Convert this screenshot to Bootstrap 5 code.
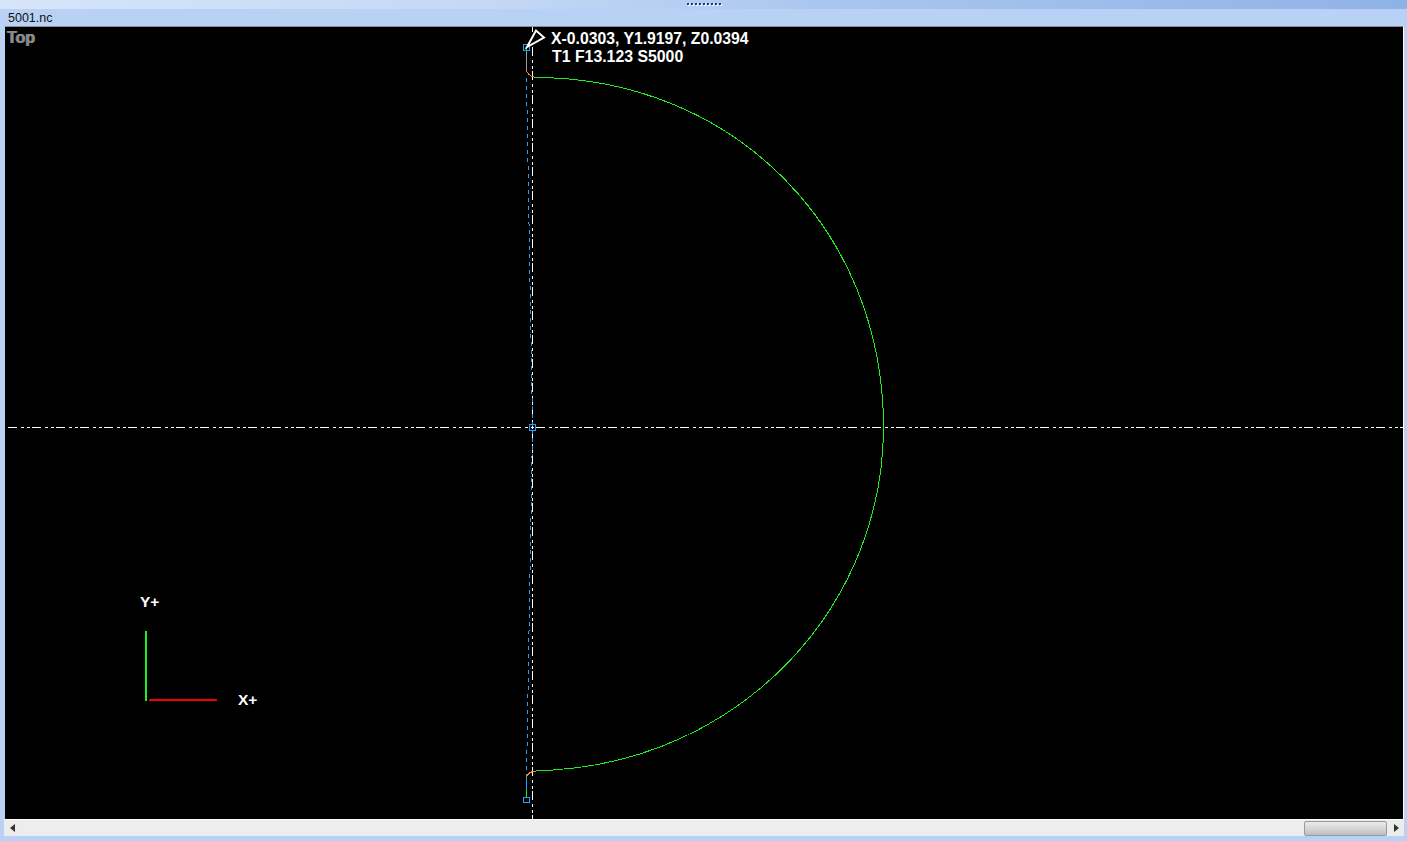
<!DOCTYPE html>
<html lang="en">
<head>
    <meta charset="UTF-8">
    <meta name="viewport" content="width=device-width, initial-scale=1.0">
    <title>5001.nc</title>
    <link rel="stylesheet" href="https://cdn.jsdelivr.net/npm/bootstrap@5.3.0/dist/css/bootstrap.min.css">
    <style>
        html, body { height: 841px; overflow: hidden; background: #b9d1f3; }
        .win-top { height: 9px; background: linear-gradient(90deg, #d6e5f9 0%, #c4d8f5 35%, #a9c5ee 60%, #8fb2e6 100%); }
        .grip { gap: 2px; padding-top: 3px; }
        .grip i { width: 2px; height: 2px; background: #1f3f80; box-shadow: 1px 1px 0 #fff; display: block; }
        .doc-title { height: 17px; padding-left: 8px; background: #b9d1f5; font: 12.5px/18px "Liberation Sans", Arial, sans-serif; color: #111; }
        .doc-edge { height: 1px; background: #8c8c8c; margin-left: 5px; margin-right: 4px; }
        .view-wrap { height: 792px; padding-left: 5px; padding-right: 3px; }
        .view-port { width: 1398px; height: 792px; background: #000; }
        .view-right { width: 1px; background: #fff; }
        .view-port svg { display: block; }
        .cnc-text { position: absolute; font-family: "Liberation Sans", Arial, sans-serif; font-weight: 700; color: #fff; white-space: nowrap; line-height: 18px; }
        .coord-a { left: 546px; top: 3px; font-size: 15.75px; }
        .coord-b { left: 547px; top: 21px; font-size: 15.85px; }
        .view-name { left: 2px; top: 2px; font-size: 16px; color: #8a8a8a; text-shadow: -.5px 0 #3f7fbf, .5px 0 #c07f3f; }
        .axis-y { left: 135px; top: 566px; font-size: 15.5px; }
        .axis-x { left: 233px; top: 664px; font-size: 15.5px; }
        .white-line { height: 1px; background: #fff; margin-left: 4px; margin-right: 3px; }
        .scroll-row { height: 16px; margin-left: 4px; margin-right: 3px; background: #ececec; }
        .arrow-box { width: 16px; }
        .arrow-left { border-style: solid; border-width: 4px 5px 4px 0; border-color: transparent #333 transparent transparent; }
        .arrow-right { border-style: solid; border-width: 4px 0 4px 5px; border-color: transparent transparent transparent #333; }
        .thumb-bar { width: 83px; height: 15px; margin-right: 1px; border: 1px solid #9a9a9a; border-radius: 2px; background: linear-gradient(#e9e9e9, #d8d8d8 45%, #bdbdbd); }
        .scroll-fill { background: #ededed; }
        .win-bottom { height: 4px; background: #b9d1f3; }
    </style>
</head>
<body class="m-0">
    <div class="win-top d-flex justify-content-center grip">
        <i></i><i></i><i></i><i></i><i></i><i></i><i></i><i></i><i></i>
    </div>
    <div class="doc-title">5001.nc</div>
    <div class="doc-edge"></div>
    <div class="view-wrap d-flex">
        <div class="view-port position-relative">
            <svg width="1398" height="792" viewBox="5 27 1398 792" fill="none" shape-rendering="crispEdges">
                <!-- center lines -->
                <path d="M8 427.5H1403" stroke="#fff" stroke-dasharray="9 4 3 3 3 2"/>
                <path d="M532.5 27V819" stroke="#fff" stroke-dasharray="9 4 3 3 3 2" stroke-dashoffset="4"/>
                <!-- rapid move -->
                <path d="M526.5 78L532.5 427L526.5 778" stroke="#19a3ff" stroke-dasharray="4 4"/>
                <!-- profile -->
                <path d="M535 77.5C733 77.5 883.5 229 883.5 427.5A351 343 0 0 1 558 769.5C552 770.5 545 770.5 536 770.5" stroke="#1eef1e"/>
                <!-- lead in -->
                <path d="M526.5 47V52" stroke="#1eef1e"/>
                <path d="M526.5 52V70" stroke="#9a9a9a"/>
                <path d="M526.5 70Q527 75 535 77.5" stroke="#ff8a1e"/>
                <!-- lead out -->
                <path d="M536 771Q527 772 526.5 778" stroke="#ff8a1e"/>
                <path d="M526.5 778V790" stroke="#19a3ff"/>
                <path d="M526.5 790V797" stroke="#1eef1e"/>
                <!-- points -->
                <rect x="523.5" y="44.5" width="6" height="6" stroke="#19a3ff"/>
                <rect x="523.5" y="797.5" width="6" height="5" stroke="#19a3ff"/>
                <rect x="529.5" y="424.5" width="6" height="6" stroke="#19a3ff"/>
                <!-- tool -->
                <path d="M527 47L536 30.5L544 37.5Z" stroke="#fff" stroke-width="2" fill="#000" shape-rendering="auto"/>
                <!-- axis triad -->
                <path d="M146 631V701" stroke="#1eef1e" stroke-width="2"/>
                <path d="M149 700H217" stroke="#f00000" stroke-width="2"/>
            </svg>
            <span class="cnc-text view-name">Top</span>
            <span class="cnc-text coord-a">X-0.0303, Y1.9197, Z0.0394</span>
            <span class="cnc-text coord-b">T1 F13.123 S5000</span>
            <span class="cnc-text axis-y">Y+</span>
            <span class="cnc-text axis-x">X+</span>
        </div>
        <div class="view-right"></div>
    </div>
    <div class="white-line"></div>
    <div class="scroll-row d-flex align-items-center">
        <div class="arrow-box d-flex justify-content-center"><div class="arrow-left"></div></div>
        <div class="scroll-fill flex-grow-1 h-100"></div>
        <div class="thumb-bar"></div>
        <div class="arrow-box d-flex justify-content-center"><div class="arrow-right"></div></div>
    </div>
    <div class="win-bottom"></div>
    <script src="https://cdn.jsdelivr.net/npm/bootstrap@5.3.0/dist/js/bootstrap.bundle.min.js"></script>
</body>
</html>
